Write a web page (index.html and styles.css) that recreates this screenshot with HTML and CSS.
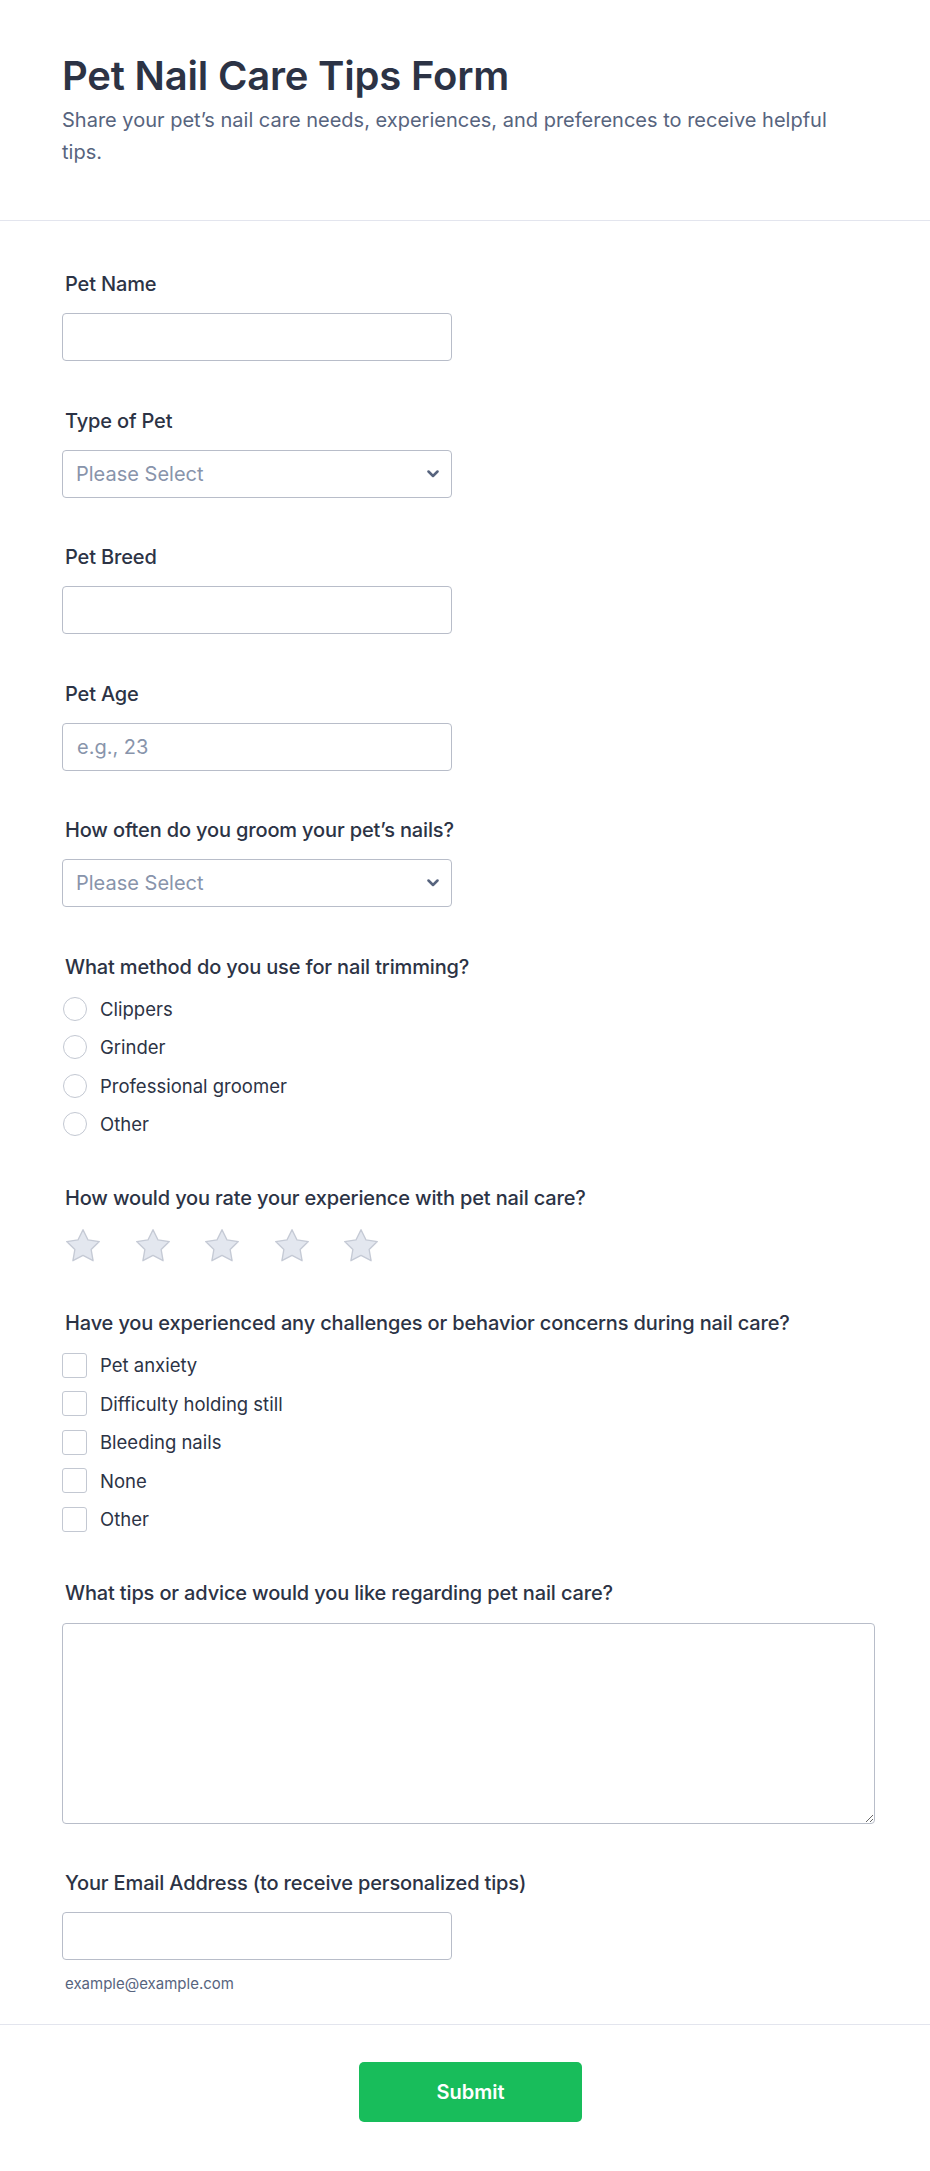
FILE: index.html
```html
<!DOCTYPE html>
<html lang="en">
<head>
  <meta charset="UTF-8" />
  <meta name="viewport" content="width=device-width, initial-scale=1.0"/>
  <title>Pet Nail Care Tips Form</title>
  <link rel="stylesheet" href="styles.css">
</head>
<body>
  <div class="form-header">
    <h1 class="form-title">Pet Nail Care Tips Form</h1>
    <p class="form-subtitle">Share your pet’s nail care needs, experiences, and preferences to receive helpful tips.</p>
  </div>

  <form class="form-body">
    <div class="field">
      <label class="field-label" for="pet-name">Pet Name</label>
      <input class="text-input" id="pet-name" type="text">
    </div>

    <div class="field">
      <label class="field-label" for="pet-type">Type of Pet</label>
      <div class="select-wrap">
        <select class="text-input select-input" id="pet-type">
          <option>Please Select</option>
          <option>Dog</option>
          <option>Cat</option>
          <option>Other</option>
        </select>
        <svg class="chevron" width="12" height="8" viewBox="0 0 12 8"><path d="M1.5 1.5l4.5 4.5 4.5-4.5" fill="none" stroke="#57647e" stroke-width="2.5" stroke-linecap="round" stroke-linejoin="round"/></svg>
      </div>
    </div>

    <div class="field">
      <label class="field-label" for="pet-breed">Pet Breed</label>
      <input class="text-input" id="pet-breed" type="text">
    </div>

    <div class="field">
      <label class="field-label" for="pet-age">Pet Age</label>
      <input class="text-input" id="pet-age" type="text" placeholder="e.g., 23">
    </div>

    <div class="field">
      <label class="field-label" for="groom-freq">How often do you groom your pet’s nails?</label>
      <div class="select-wrap">
        <select class="text-input select-input" id="groom-freq">
          <option>Please Select</option>
          <option>Weekly</option>
          <option>Monthly</option>
          <option>Rarely</option>
        </select>
        <svg class="chevron" width="12" height="8" viewBox="0 0 12 8"><path d="M1.5 1.5l4.5 4.5 4.5-4.5" fill="none" stroke="#57647e" stroke-width="2.5" stroke-linecap="round" stroke-linejoin="round"/></svg>
      </div>
    </div>

    <div class="field">
      <div class="field-label">What method do you use for nail trimming?</div>
      <div class="options">
        <label class="option"><input type="radio" name="method" class="radio"> Clippers</label>
        <label class="option"><input type="radio" name="method" class="radio"> Grinder</label>
        <label class="option"><input type="radio" name="method" class="radio"> Professional groomer</label>
        <label class="option"><input type="radio" name="method" class="radio"> Other</label>
      </div>
    </div>

    <div class="field">
      <div class="field-label">How would you rate your experience with pet nail care?</div>
      <div class="stars">
        <svg class="star" viewBox="1.5 1.5 21 21"><path d="M12 2.5l2.94 5.96 6.56.95-4.75 4.63 1.12 6.54L12 17.5l-5.87 3.08 1.12-6.54L2.5 9.41l6.56-.95z"/></svg>
        <svg class="star" viewBox="1.5 1.5 21 21"><path d="M12 2.5l2.94 5.96 6.56.95-4.75 4.63 1.12 6.54L12 17.5l-5.87 3.08 1.12-6.54L2.5 9.41l6.56-.95z"/></svg>
        <svg class="star" viewBox="1.5 1.5 21 21"><path d="M12 2.5l2.94 5.96 6.56.95-4.75 4.63 1.12 6.54L12 17.5l-5.87 3.08 1.12-6.54L2.5 9.41l6.56-.95z"/></svg>
        <svg class="star" viewBox="1.5 1.5 21 21"><path d="M12 2.5l2.94 5.96 6.56.95-4.75 4.63 1.12 6.54L12 17.5l-5.87 3.08 1.12-6.54L2.5 9.41l6.56-.95z"/></svg>
        <svg class="star" viewBox="1.5 1.5 21 21"><path d="M12 2.5l2.94 5.96 6.56.95-4.75 4.63 1.12 6.54L12 17.5l-5.87 3.08 1.12-6.54L2.5 9.41l6.56-.95z"/></svg>
      </div>
    </div>

    <div class="field">
      <div class="field-label">Have you experienced any challenges or behavior concerns during nail care?</div>
      <div class="options">
        <label class="option"><input type="checkbox" class="checkbox"> Pet anxiety</label>
        <label class="option"><input type="checkbox" class="checkbox"> Difficulty holding still</label>
        <label class="option"><input type="checkbox" class="checkbox"> Bleeding nails</label>
        <label class="option"><input type="checkbox" class="checkbox"> None</label>
        <label class="option"><input type="checkbox" class="checkbox"> Other</label>
      </div>
    </div>

    <div class="field">
      <label class="field-label" for="tips">What tips or advice would you like regarding pet nail care?</label>
      <textarea class="text-area" id="tips"></textarea>
    </div>

    <div class="field">
      <label class="field-label" for="email">Your Email Address (to receive personalized tips)</label>
      <input class="text-input" id="email" type="email">
      <div class="field-hint">example@example.com</div>
    </div>
  </form>

  <div class="form-footer">
    <button class="submit-btn" type="button">Submit</button>
  </div>
</body>
</html>
```

FILE: styles.css
```css
:root {
  --text: #2c3345;
  --muted: #57647e;
  --placeholder: #8894ab;
  --border: #b8bdc9;
  --divider: #e3e5ee;
  --green: #18bd5b;
}

body {
  margin: 0;
  padding: 0;
  background: #fff;
  font-family: 'Inter', 'Noto Sans', sans-serif;
  color: var(--text);
}

.form-header {
  padding: 52px 62px 52px;
  border-bottom: 1px solid var(--divider);
}

.form-title {
  margin: 0;
  font-size: 40px;
  line-height: 48px;
  font-weight: 600;
  letter-spacing: -0.2px;
  color: var(--text);
}

.form-subtitle {
  margin: 4px 0 0;
  max-width: 790px;
  font-size: 20px;
  line-height: 32px;
  color: var(--muted);
}

.form-body {
  display: flex;
  flex-direction: column;
  gap: 47.5px;
  padding: 51px 55px 31px 62px;
}

.field {
  display: flex;
  flex-direction: column;
  align-items: flex-start;
}

.field-label {
  display: block;
  padding-left: 3px;
  margin-bottom: 17px;
  font-size: 20px;
  line-height: 24px;
  font-weight: 500;
  letter-spacing: -0.15px;
  color: var(--text);
}

.text-input {
  box-sizing: border-box;
  width: 390px;
  height: 48px;
  padding: 0 14px;
  border: 1px solid var(--border);
  border-radius: 4px;
  background: #fff;
  font-family: inherit;
  font-size: 20px;
  color: var(--text);
  outline: none;
}

.text-input::placeholder {
  color: var(--placeholder);
}

.select-wrap {
  position: relative;
}

.select-input {
  appearance: none;
  -webkit-appearance: none;
  padding: 0 40px 0 13px;
  color: var(--placeholder);
}

.chevron {
  position: absolute;
  right: 13px;
  top: 20px;
  pointer-events: none;
}

.options {
  display: flex;
  flex-direction: column;
  gap: 10.5px;
  margin-top: -1px;
}

.option {
  display: flex;
  align-items: center;
  height: 28px;
  gap: 13px;
  font-size: 18.5px;
  color: var(--text);
}

.radio,
.checkbox {
  appearance: none;
  -webkit-appearance: none;
  box-sizing: border-box;
  margin: 0;
  border: 1.5px solid #c3c8d2;
  background: #fff;
}

.radio {
  width: 24px;
  height: 24px;
  margin-left: 1px;
  border-radius: 50%;
}

.checkbox {
  width: 25px;
  height: 25px;
  border-radius: 3px;
}

.stars {
  display: flex;
  gap: 33.5px;
  margin-top: 1px;
  padding-left: 3px;
}

.star {
  width: 36px;
  height: 36px;
}

.star path {
  fill: #e3e7ef;
  stroke: #c5cad5;
  stroke-width: 0.8;
  stroke-linejoin: round;
}

.text-area {
  box-sizing: border-box;
  width: 813px;
  height: 201px;
  margin-top: 1px;
  padding: 12px 14px;
  border: 1px solid var(--border);
  border-radius: 4px;
  font-family: inherit;
  font-size: 20px;
  color: var(--text);
  outline: none;
  resize: vertical;
}

.field-hint {
  margin-top: 15px;
  padding-left: 3px;
  font-size: 15px;
  line-height: 18px;
  color: var(--muted);
}

.form-footer {
  display: flex;
  justify-content: center;
  padding: 37px 0 49px 11px;
  border-top: 1px solid var(--divider);
}

.submit-btn {
  width: 223px;
  height: 60px;
  border: none;
  border-radius: 5px;
  background: var(--green);
  font-family: inherit;
  font-size: 20px;
  font-weight: 600;
  color: #fff;
  cursor: pointer;
}
```
